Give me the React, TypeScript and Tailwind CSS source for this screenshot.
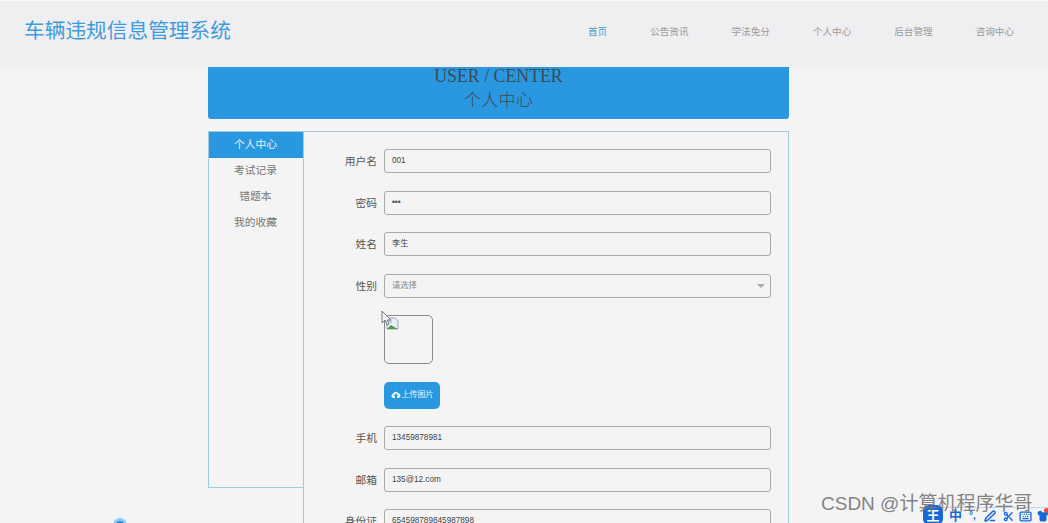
import { Keyboard, PenLine, Scissors, Shirt } from 'lucide-react'

const navItems = ['首页', '公告资讯', '学法免分', '个人中心', '后台管理', '咨询中心']
const sideItems = ['个人中心', '考试记录', '错题本', '我的收藏']
const cjk = { fontFamily: '"Liberation Sans", "Noto Sans CJK SC", sans-serif' }

function Field({ label, value }: { label: string; value: string }) {
  return (
    <div className="flex items-center">
      <label className="w-[74px] pr-[7px] text-right text-[10.75px] leading-6 text-[#555]">{label}</label>
      <div className="flex h-6 w-[387px] items-center rounded-[3px] border border-[#a9a9a9] px-[7px] pt-px text-[8.2px] text-[#444]">
        {value}
      </div>
    </div>
  )
}

function BrokenImage() {
  return (
    <svg width="13" height="13" viewBox="0 0 13 13" className="ml-px mt-px">
      <path d="M1 1h8l3 3v8H1z" fill="#e8eef6" stroke="#9aa9bd" strokeWidth="1" />
      <path d="M1 12l4-4 3 2 4 2z" fill="#4c9a3c" />
      <path d="M2 3h4v3H2z" fill="#b9d0ee" />
    </svg>
  )
}

function UploadCloud() {
  return (
    <svg width="10" height="8" viewBox="0 0 10 8" fill="currentColor">
      <path d="M2.4 7A2.2 2.2 0 0 1 2 2.7 2.9 2.9 0 0 1 7.4 2.3 2.4 2.4 0 0 1 7.8 7H6V5h1.4L5 2.6 2.6 5H4v2z" />
    </svg>
  )
}

export default function App() {
  return (
    <div className="relative h-[523px] overflow-hidden bg-[#f4f4f4]" style={cjk}>
      <header className="flex h-[67px] items-center justify-between border-t border-[#f8f8f8] bg-[#efeef0] pb-[5px] pl-6 pr-[34px]">
        <h1 className="text-[20.7px] font-normal leading-none text-[#3f9cdc]">车辆违规信息管理系统</h1>
        <nav className="flex gap-[43px]">
          {navItems.map((item, i) => (
            <a key={item} className={`text-[9.6px] leading-none ${i === 0 ? 'text-[#4a9cc8]' : 'text-[#9a9a9a]'}`}>
              {item}
            </a>
          ))}
        </nav>
      </header>

      <div className="ml-[208px] w-[581px]">
        <div className="flex h-[52px] flex-col items-center rounded-b-[3px] bg-[#2a98e0] text-[#3c4a55]">
          <div className="mt-[-1px] h-[20px] text-[17.8px] leading-[20px] [font-family:'Liberation_Serif',serif]">USER / CENTER</div>
          <div className="mt-[2px] text-[17px] font-light leading-[26px] tracking-[0.3px]">个人中心</div>
        </div>

        <div className="mt-3 flex items-start">
          <aside className="h-[357px] w-[96px] shrink-0 border border-[#9fcbdd]">
            {sideItems.map((item, i) => (
              <div
                key={item}
                className={`h-[26px] pr-px text-center text-[10.75px] leading-[25px] ${i === 0 ? 'bg-[#2a98e0] text-[#e6f3fb]' : 'text-[#777]'}`}
              >
                {item}
              </div>
            ))}
          </aside>

          <main className="-ml-px flex h-[500px] flex-1 flex-col gap-[17.5px] border border-[#9fcbdd] pl-[6px] pt-[17px]">
            <Field label="用户名" value="001" />
            <Field label="密码" value="•••" />
            <Field label="姓名" value="李生" />
            <div className="flex items-center">
              <label className="w-[74px] pr-[7px] text-right text-[10.75px] leading-6 text-[#555]">性别</label>
              <div className="flex h-6 w-[387px] items-center justify-between rounded-[3px] border border-[#a9a9a9] pl-[7px] pr-[5px] pt-px text-[8.2px] text-[#888]">
                请选择
                <span className="h-0 w-0 border-x-[4px] border-t-[4px] border-x-transparent border-t-[#aaa]" />
              </div>
            </div>
            <div className="ml-[74px] h-[49px] w-[49px] rounded-[5px] border border-[#8a8a8a]">
              <BrokenImage />
            </div>
            <button className="ml-[74px] flex h-[27px] w-[56px] items-center justify-center gap-px rounded-[5px] bg-[#2a98e0] text-[8px] text-[#e8f4fc]">
              <UploadCloud />
              上传图片
            </button>
            <Field label="手机" value="13459878981" />
            <Field label="邮箱" value="135@12.com" />
            <Field label="身份证" value="654598789845987898" />
          </main>
        </div>
      </div>

      {/* screen recording leftovers on top of the page */}
      <svg width="11" height="16" viewBox="0 0 11 16" className="absolute left-[381px] top-[310px]">
        <path d="M1 1v12l3-3 2 5 2-1-2-4h4z" fill="#f4f4f4" stroke="#777" strokeWidth="1" />
      </svg>
      <div className="absolute left-[113px] top-[518px] h-[14px] w-[14px] rounded-full border-[3px] border-[#8ccbfa] bg-[#1e88e5]" />
      <div className="absolute left-[943px] top-[507px] h-px w-[105px] bg-[#bcd4f5]" />
      <div className="absolute left-[923px] top-[505px] flex h-[20px] w-[20px] items-center justify-center rounded-[6px] bg-[#1668d8] text-[13px] font-bold leading-none text-white">
        王
      </div>
      <div className="absolute left-[949px] top-[509px] flex items-center text-[#1668d8]">
        <span className="text-[13px] font-bold leading-[14px]">中</span>
        <span className="ml-[7px] w-[10px] text-[10px] font-bold leading-[14px]">°,</span>
        <PenLine size={12} strokeWidth={3} className="ml-[5px]" />
        <Scissors size={11} strokeWidth={3} className="ml-[7px]" />
        <Keyboard size={13} strokeWidth={2.5} className="ml-[5px]" />
        <Shirt size={12} fill="#1668d8" className="ml-[5px]" />
      </div>
      <div className="absolute left-[1044px] top-[508px] h-[5px] w-[5px] rounded-full bg-[#e8502a]" />
      <div className="absolute left-[821px] top-[493px] text-[19px] leading-[22px] text-[#777] opacity-90">CSDN @计算机程序华哥</div>
    </div>
  )
}
